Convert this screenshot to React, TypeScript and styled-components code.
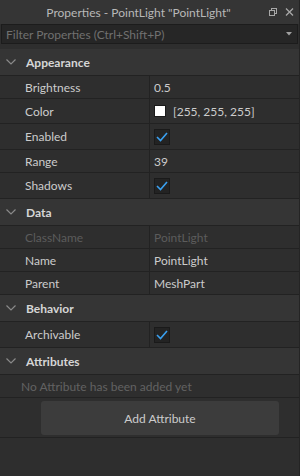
import styled, { createGlobalStyle } from "styled-components";

const GlobalStyle = createGlobalStyle`
  html, body {
    margin: 0;
    padding: 0;
    background: #2e2e2e;
  }
  body {
    font-family: Lato, "Noto Sans", "Liberation Sans", sans-serif;
  }
`;

const Panel = styled.div`
  width: 300px;
  height: 476px;
  background: #2e2e2e;
  display: flex;
  flex-direction: column;
  overflow: hidden;
  border-right: 1px solid #242424;
  box-sizing: border-box;
`;

const TitleBar = styled.div`
  height: 24px;
  background: #353535;
  display: flex;
  align-items: center;
  flex-shrink: 0;
`;

const Title = styled.div`
  flex: 1;
  text-align: center;
  color: #b8b8b8;
  font-size: 12px;
  padding-left: 8px;
`;

const TitleIcons = styled.div`
  display: flex;
  gap: 8px;
  align-items: center;
  padding-right: 5px;
`;

const Filter = styled.div`
  height: 20px;
  margin: 0 1px;
  background: #262626;
  border: 1px solid #1c1c1c;
  box-sizing: border-box;
  display: flex;
  align-items: center;
  justify-content: space-between;
  padding: 0 5px 0 4px;
  color: #707070;
  font-size: 12px;
  flex-shrink: 0;
`;

const List = styled.div`
  margin-top: 5px;
  display: flex;
  flex-direction: column;
`;

const SectionHeader = styled.div`
  height: 27px;
  box-sizing: border-box;
  background: #353535;
  border-bottom: 1px solid #222;
  display: flex;
  align-items: center;
  gap: 10px;
  padding-left: 6px;
  color: #d6d6d6;
  font-size: 12px;
  font-weight: 700;
`;

const Row = styled.div<{ $h: number }>`
  height: ${(p) => p.$h}px;
  box-sizing: border-box;
  border-bottom: 1px solid #222;
  display: flex;
`;

const Label = styled.div<{ $disabled?: boolean }>`
  width: 150px;
  box-sizing: border-box;
  border-right: 1px solid #222;
  padding-left: 25px;
  display: flex;
  align-items: center;
  font-size: 12px;
  color: ${(p) => (p.$disabled ? "#5c5c5c" : "#cccccc")};
`;

const Value = styled.div<{ $disabled?: boolean }>`
  flex: 1;
  padding-left: 4px;
  display: flex;
  align-items: center;
  gap: 7px;
  font-size: 12px;
  color: ${(p) => (p.$disabled ? "#5c5c5c" : "#cccccc")};
`;

const Swatch = styled.span<{ $color: string }>`
  width: 12px;
  height: 12px;
  box-sizing: border-box;
  background: ${(p) => p.$color};
  border: 1px solid #1a1a1a;
`;

const CheckBox = styled.span`
  width: 16px;
  height: 16px;
  box-sizing: border-box;
  background: #232323;
  border: 1px solid #1a1a1a;
  display: flex;
  align-items: center;
  justify-content: center;
`;

const Note = styled.div`
  height: 23px;
  box-sizing: border-box;
  border-bottom: 1px solid #222;
  padding-left: 21px;
  display: flex;
  align-items: center;
  color: #626262;
  font-size: 12px;
`;

const ButtonArea = styled.div`
  height: 40px;
  box-sizing: border-box;
  border-bottom: 1px solid #222;
  padding: 3px 20px 0 41px;
`;

const AddButton = styled.div`
  width: 238px;
  height: 34px;
  border-radius: 3px;
  background: #3c3c3c;
  color: #cccccc;
  font-size: 12px;
  display: flex;
  align-items: center;
  justify-content: center;
`;

const Chevron = () => (
  <svg width="10" height="6" viewBox="0 0 10 6">
    <path d="M0.5 0.5 L5 5 L9.5 0.5" fill="none" stroke="#8a8a8a" strokeWidth="1.2" />
  </svg>
);

const Check = () => (
  <svg width="12" height="10" viewBox="0 0 12 10">
    <path d="M1 5 L4.5 8.5 L11 1" fill="none" stroke="#3aa0f0" strokeWidth="1.6" />
  </svg>
);

type Prop = {
  name: string;
  value?: string;
  swatch?: string;
  checked?: boolean;
  disabled?: boolean;
};

const sections: { title: string; props: Prop[] }[] = [
  {
    title: "Appearance",
    props: [
      { name: "Brightness", value: "0.5" },
      { name: "Color", value: "[255, 255, 255]", swatch: "#ffffff" },
      { name: "Enabled", checked: true },
      { name: "Range", value: "39" },
      { name: "Shadows", checked: true },
    ],
  },
  {
    title: "Data",
    props: [
      { name: "ClassName", value: "PointLight", disabled: true },
      { name: "Name", value: "PointLight" },
      { name: "Parent", value: "MeshPart" },
    ],
  },
  {
    title: "Behavior",
    props: [{ name: "Archivable", checked: true }],
  },
];

const rowHeight = (p: Prop) => (p.checked ? 26 : p.swatch ? 25 : 23);

const App = () => {
  return (
    <>
      <GlobalStyle />
      <Panel>
        <TitleBar>
          <Title>Properties - PointLight "PointLight"</Title>
          <TitleIcons>
            <svg width="8" height="8" viewBox="0 0 8 8">
              <rect x="2.5" y="0.5" width="5" height="5" fill="none" stroke="#a8a8a8" />
              <rect x="0.5" y="2.5" width="5" height="5" fill="#353535" stroke="#a8a8a8" />
            </svg>
            <svg width="9" height="8" viewBox="0 0 9 8">
              <path d="M1 0.5 L8 7.5 M8 0.5 L1 7.5" stroke="#a8a8a8" strokeWidth="1.3" />
            </svg>
          </TitleIcons>
        </TitleBar>
        <Filter>
          <span>Filter Properties (Ctrl+Shift+P)</span>
          <svg width="6" height="4" viewBox="0 0 6 4">
            <path d="M0 0 L6 0 L3 3.5 Z" fill="#a0a0a0" />
          </svg>
        </Filter>
        <List>
          {sections.map((s) => (
            <div key={s.title}>
              <SectionHeader>
                <Chevron />
                {s.title}
              </SectionHeader>
              {s.props.map((p) => (
                <Row key={p.name} $h={rowHeight(p)}>
                  <Label $disabled={p.disabled}>{p.name}</Label>
                  <Value $disabled={p.disabled}>
                    {p.swatch && <Swatch $color={p.swatch} />}
                    {p.checked && (
                      <CheckBox>
                        <Check />
                      </CheckBox>
                    )}
                    {p.value}
                  </Value>
                </Row>
              ))}
            </div>
          ))}
          <SectionHeader>
            <Chevron />
            Attributes
          </SectionHeader>
          <Note>No Attribute has been added yet</Note>
          <ButtonArea>
            <AddButton>Add Attribute</AddButton>
          </ButtonArea>
        </List>
      </Panel>
    </>
  );
};

export default App;
